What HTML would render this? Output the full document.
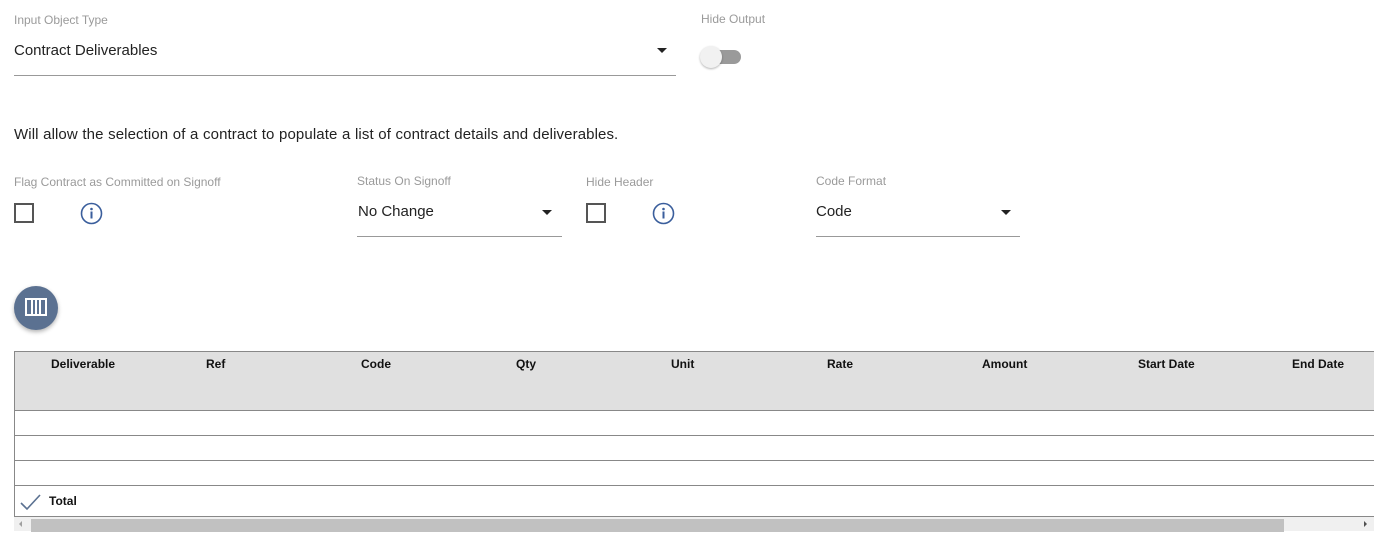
<!DOCTYPE html>
<html><head><style>
body{margin:0;width:1381px;height:552px;background:#fff;font-family:"Liberation Sans",sans-serif;position:relative;overflow:hidden}
.a{position:absolute}
.lbl{font-size:12px;color:#9a9a9a}
.val{font-size:15px;color:#222}
.ul{height:1px;background:#999}
.tri{width:0;height:0;border-left:5px solid transparent;border-right:5px solid transparent;border-top:5px solid #222}
.cb{border:2px solid #555;box-sizing:border-box;width:20px;height:20px}
.th{font-size:12px;font-weight:bold;color:#111;top:357px}
.hl{height:1px;background:#888;left:14px;width:1360px}
</style></head><body>
<div class="a lbl" style="left:14px;top:13px">Input Object Type</div>
<div class="a val" style="left:14px;top:42px">Contract Deliverables</div>
<div class="a tri" style="left:657px;top:48px"></div>
<div class="a ul" style="left:14px;top:75px;width:662px"></div>
<div class="a lbl" style="left:701px;top:12px">Hide Output</div>
<div class="a" style="left:704px;top:50px;width:37px;height:14px;border-radius:7px;background:#9a9a9a"></div>
<div class="a" style="left:700px;top:46px;width:22px;height:22px;border-radius:50%;background:#f1f1f1;box-shadow:0 1px 2px rgba(0,0,0,.3)"></div>
<div class="a" style="left:14px;top:126px;font-size:15px;color:#222;letter-spacing:0.1px;word-spacing:0.3px">Will allow the selection of a contract to populate a list of contract details and deliverables.</div>
<div class="a lbl" style="left:14px;top:175px">Flag Contract as Committed on Signoff</div>
<div class="a cb" style="left:14px;top:203px"></div>
<svg class="a" style="left:80px;top:202px" width="23" height="23" viewBox="0 0 23 23"><circle cx="11.5" cy="11.5" r="10" fill="none" stroke="#3a5e9c" stroke-width="1.6"/><circle cx="11.5" cy="7" r="1.3" fill="#3a5e9c"/><rect x="10.5" y="9.5" width="2" height="7" fill="#3a5e9c"/></svg>
<div class="a lbl" style="left:357px;top:174px">Status On Signoff</div>
<div class="a val" style="left:358px;top:203px">No Change</div>
<div class="a tri" style="left:542px;top:210px"></div>
<div class="a ul" style="left:357px;top:236px;width:205px"></div>
<div class="a lbl" style="left:586px;top:175px">Hide Header</div>
<div class="a cb" style="left:586px;top:203px"></div>
<svg class="a" style="left:652px;top:202px" width="23" height="23" viewBox="0 0 23 23"><circle cx="11.5" cy="11.5" r="10" fill="none" stroke="#3a5e9c" stroke-width="1.6"/><circle cx="11.5" cy="7" r="1.3" fill="#3a5e9c"/><rect x="10.5" y="9.5" width="2" height="7" fill="#3a5e9c"/></svg>
<div class="a lbl" style="left:816px;top:174px">Code Format</div>
<div class="a val" style="left:816px;top:203px">Code</div>
<div class="a tri" style="left:1001px;top:210px"></div>
<div class="a ul" style="left:816px;top:236px;width:204px"></div>
<div class="a" style="left:14px;top:286px;width:44px;height:44px;border-radius:50%;background:#5b7191;box-shadow:0 2px 4px rgba(0,0,0,.3)"></div>
<svg class="a" style="left:25px;top:298px" width="22" height="18" viewBox="0 0 22 18"><rect x="1" y="1" width="20" height="16" fill="none" stroke="#fff" stroke-width="2"/><rect x="6" y="1" width="2" height="16" fill="#fff"/><rect x="10" y="1" width="2" height="16" fill="#fff"/><rect x="14" y="1" width="2" height="16" fill="#fff"/></svg>
<div class="a" style="left:14px;top:351px;width:1360px;height:59px;background:#e0e0e0;border-top:1px solid #888;border-left:1px solid #888;box-sizing:border-box"></div>
<div class="a" style="left:14px;top:351px;width:1px;height:166px;background:#888"></div>
<div class="a th" style="left:51px">Deliverable</div>
<div class="a th" style="left:206px">Ref</div>
<div class="a th" style="left:361px">Code</div>
<div class="a th" style="left:516px">Qty</div>
<div class="a th" style="left:671px">Unit</div>
<div class="a th" style="left:827px">Rate</div>
<div class="a th" style="left:982px">Amount</div>
<div class="a th" style="left:1138px">Start Date</div>
<div class="a th" style="left:1292px">End Date</div>
<div class="a hl" style="top:410px"></div>
<div class="a hl" style="top:435px"></div>
<div class="a hl" style="top:460px"></div>
<div class="a hl" style="top:485px"></div>
<div class="a hl" style="top:516px"></div>
<svg class="a" style="left:20px;top:493px" width="22" height="18" viewBox="0 0 22 18"><path d="M1 10 L7 16 L20 2" fill="none" stroke="#5b7191" stroke-width="1.6"/></svg>
<div class="a" style="left:49px;top:494px;font-size:12px;font-weight:bold;color:#111">Total</div>
<div class="a" style="left:14px;top:517px;width:1360px;height:14px;background:#f0f0f0"></div>
<div class="a" style="left:31px;top:519px;width:1253px;height:13px;background:#c1c1c1"></div>
<div class="a" style="left:19px;top:521px;width:0;height:0;border-top:3px solid transparent;border-bottom:3px solid transparent;border-right:3px solid #a0a0a0"></div>
<div class="a" style="left:1364px;top:521px;width:0;height:0;border-top:3px solid transparent;border-bottom:3px solid transparent;border-left:3px solid #505050"></div>
</body></html>
